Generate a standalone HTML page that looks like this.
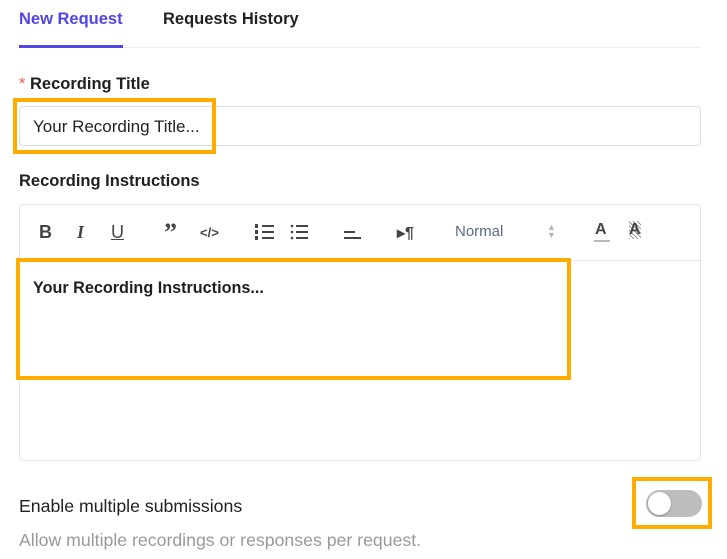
<!DOCTYPE html>
<html><head><meta charset="utf-8"><style>
body{margin:0;width:727px;height:559px;background:#fff;font-family:"Liberation Sans",sans-serif;position:relative;overflow:hidden;color:#1f1f1f}
.a{position:absolute;white-space:nowrap}
.ob{position:absolute;border:4px solid #ffab00;box-sizing:border-box}
.ic{position:absolute;top:222px;font-weight:bold;color:#444;font-size:18px}
</style></head><body>
<div class="a" style="left:19px;top:10px;font-size:16.5px;font-weight:bold;color:#5046e8">New Request</div>
<div class="a" style="left:163px;top:10px;font-size:16.5px;font-weight:bold;color:#222">Requests History</div>
<div class="a" style="left:19px;top:47px;width:682px;height:1px;background:#eee"></div>
<div class="a" style="left:19px;top:45px;width:104px;height:3px;background:#5046e8"></div>

<div class="a" style="left:19px;top:75px;font-size:16.5px;font-weight:bold"><span style="color:#ff5a4f;font-weight:normal">*</span> Recording Title</div>
<div class="a" style="left:19px;top:106px;width:682px;height:40px;border:1px solid #ddd;border-radius:4px;box-sizing:border-box"></div>
<div class="a" style="left:33px;top:117px;font-size:17px;color:#222">Your Recording Title...</div>
<div class="ob" style="left:13px;top:98px;width:203px;height:56px"></div>

<div class="a" style="left:19px;top:172px;font-size:16.5px;font-weight:bold">Recording Instructions</div>
<div class="a" style="left:19px;top:204px;width:682px;height:257px;border:1px solid #e3e3e8;border-radius:4px;box-sizing:border-box"></div>
<div class="a" style="left:20px;top:260px;width:680px;height:1px;background:#e8e8ec"></div>
<div class="ic" style="left:39px">B</div>
<div class="ic" style="left:77px;font-style:italic;font-family:'Liberation Serif',serif">I</div>
<div class="ic" style="left:111px;text-decoration:underline;font-weight:normal">U</div>
<div class="ic" style="left:164px;font-family:'Liberation Serif',serif;font-size:26px;top:218px">”</div>
<div class="ic" style="left:200px;font-size:13px;top:225px">&lt;/&gt;</div>
<svg class="a" style="left:254px;top:223px" width="60" height="18"><g stroke="#444" stroke-width="2"><line x1="8" y1="3" x2="20" y2="3"/><line x1="8" y1="9" x2="20" y2="9"/><line x1="8" y1="15" x2="20" y2="15"/><line x1="42" y1="3" x2="54" y2="3"/><line x1="42" y1="9" x2="54" y2="9"/><line x1="42" y1="15" x2="54" y2="15"/></g><g fill="#444"><rect x="1" y="1" width="3" height="4"/><rect x="1" y="7" width="3" height="4"/><rect x="1" y="13" width="3" height="4"/><circle cx="38" cy="3" r="1.3"/><circle cx="38" cy="9" r="1.3"/><circle cx="38" cy="15" r="1.3"/></g></svg>
<svg class="a" style="left:343px;top:224px" width="20" height="18"><g stroke="#444" stroke-width="2"><line x1="1" y1="8" x2="12" y2="8"/><line x1="1" y1="14" x2="18" y2="14"/></g></svg>
<div class="ic" style="left:397px;font-size:16px;top:223px">▸¶</div>
<div class="a" style="left:455px;top:223px;font-size:15px;color:#5b6b80">Normal</div>
<div class="a" style="left:547px;top:223px;font-size:9px;color:#b0b8c4;line-height:8px">▲<br>▼</div>
<div class="a" style="left:595px;top:221px;font-size:16px;font-weight:bold;color:#444">A</div>
<div class="a" style="left:594px;top:240px;width:16px;height:2px;background:#bbb"></div>
<div class="a" style="left:629px;top:221px;font-size:16px;font-weight:bold;color:#444;background:repeating-linear-gradient(45deg,#999 0 1px,#fff 1px 3px)">A</div>

<div class="a" style="left:33px;top:279px;font-size:16.2px;font-weight:bold">Your Recording Instructions...</div>
<div class="ob" style="left:16px;top:258px;width:555px;height:122px"></div>

<div class="a" style="left:19px;top:496px;font-size:17.7px;color:#222">Enable multiple submissions</div>
<div class="a" style="left:19px;top:530px;font-size:17.7px;color:#999">Allow multiple recordings or responses per request.</div>
<div class="ob" style="left:632px;top:477px;width:80px;height:52px"></div>
<div class="a" style="left:646px;top:490px;width:56px;height:27px;border-radius:14px;background:#bdbdbd"></div>
<div class="a" style="left:648px;top:492px;width:23px;height:23px;border-radius:50%;background:#fff;box-shadow:0 1px 2px rgba(0,0,0,.3)"></div>
</body></html>
